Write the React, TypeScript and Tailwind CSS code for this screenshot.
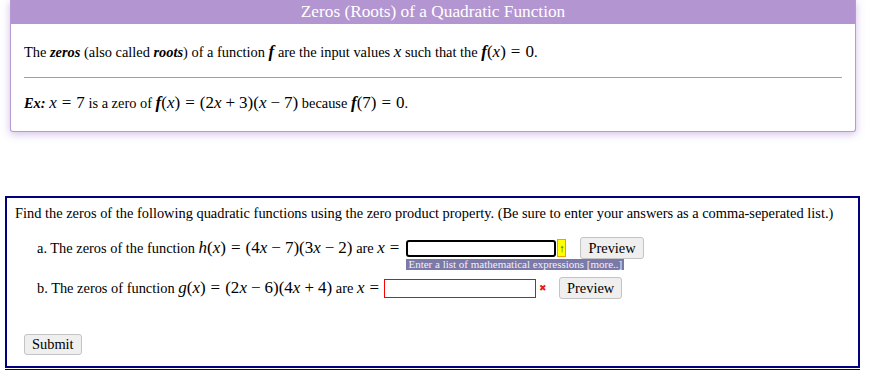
import React from "react";

const V = ({ children }: { children: React.ReactNode }) => (
  <span className="italic [font-family:'Liberation_Serif',serif]">{children}</span>
);

const M = ({ children }: { children: React.ReactNode }) => (
  <span className="text-[17px] whitespace-nowrap [font-family:'Liberation_Serif',serif]">{children}</span>
);

const Eq = () => <span className="mx-[5px]">=</span>;
const Op = ({ children }: { children: React.ReactNode }) => (
  <span className="mx-[4px]">{children}</span>
);

function PreviewBtn() {
  return (
    <button className="h-[22px] px-[7px] bg-[#efefef] border border-[#c4c4c4] rounded-[3px] text-[14.4px] leading-none text-black [font-family:'Liberation_Serif',serif]">
      Preview
    </button>
  );
}

export default function App() {
  return (
    <div className="w-[869px] h-[370px] overflow-hidden bg-white text-black text-[14.4px] [font-family:'Liberation_Serif',serif] relative">
      {/* Top card */}
      <div className="ml-[10px] w-[846px] border-x border-b border-[#b79ad3] rounded-b-[3px] shadow-[0_2px_8px_rgba(150,110,200,0.45)] bg-white">
        <div className="h-[24px] bg-[#b395d1] text-white text-[17.3px] flex items-center justify-center leading-none">
          Zeros (Roots) of a Quadratic Function
        </div>
        <div className="px-[13px]">
          <div className="pt-[18px] h-[53px] leading-[20px] whitespace-nowrap">
            The <b><i>zeros</i></b> (also called <b><i>roots</i></b>) of a function <M><V><b>f</b></V></M> are the input values <M><V>x</V></M> such that the{" "}
            <M><V><b>f</b></V>(<V>x</V>)<Eq />0</M>.
          </div>
          <div className="border-t border-[#a0a0a0]" />
          <div className="pt-[15px] h-[53px] leading-[20px] whitespace-nowrap">
            <b><i>Ex:</i></b> <M><V>x</V><Eq />7</M> is a zero of{" "}
            <M><V><b>f</b></V>(<V>x</V>)<Eq />(2<V>x</V><Op>+</Op>3)(<V>x</V><Op>−</Op>7)</M> because{" "}
            <M><V><b>f</b></V>(7)<Eq />0</M>.
          </div>
        </div>
      </div>

      {/* Problem box */}
      <div className="absolute left-[5px] top-[196px] w-[855px] h-[172px] border-2 border-[#000080] bg-white">
        <div className="pl-[8px] pt-[6px] leading-[18px] whitespace-nowrap">
          Find the zeros of the following quadratic functions using the zero product property. (Be sure to enter your answers as a comma-seperated list.)
        </div>
        <div className="ml-[30px] mt-[14px] flex items-center h-[24px] relative">
          <span className="whitespace-nowrap">
            a. The zeros of the function{" "}
            <M><V>h</V>(<V>x</V>)<Eq />(4<V>x</V><Op>−</Op>7)(3<V>x</V><Op>−</Op>2)</M> are{" "}
            <M><V>x</V><Eq /></M>
          </span>
          <div className="relative ml-[2px]">
            <div className="w-[150px] h-[17px] border-2 border-black rounded-[3px] bg-white" />
            <div className="absolute left-0 top-[19px] h-[11px] bg-[#7b79a8] text-[#f2f2f2] text-[11px] leading-[11px] px-[2px] whitespace-nowrap">
              Enter a list of mathematical expressions [more..]
            </div>
          </div>
          <div className="ml-[1px] w-[9px] h-[18px] bg-[#ffff00] border border-[#f0a000] text-[11px] leading-[16px] text-center text-[#304030]">↑</div>
          <div className="ml-[14px]"><PreviewBtn /></div>
        </div>
        <div className="ml-[30px] mt-[16px] flex items-center h-[24px]">
          <span className="whitespace-nowrap">
            b. The zeros of function{" "}
            <M><V>g</V>(<V>x</V>)<Eq />(2<V>x</V><Op>−</Op>6)(4<V>x</V><Op>+</Op>4)</M> are{" "}
            <M><V>x</V><Eq /></M>
          </span>
          <div className="ml-[0px] w-[152px] h-[19px] border border-[#ff0000] bg-white" />
          <span className="ml-[3px] text-[#e02020] text-[9px] leading-none">✖</span>
          <div className="ml-[12px]"><PreviewBtn /></div>
        </div>
        <div className="ml-[17px] mt-[34px]">
          <button className="h-[21px] px-[7px] bg-[#efefef] border border-[#c4c4c4] rounded-[3px] text-[14.4px] leading-none text-black [font-family:'Liberation_Serif',serif]">
            Submit
          </button>
        </div>
      </div>
      <div className="absolute left-[5px] top-[369px] w-[855px] h-[10px] border-2 border-[#000080]" />
    </div>
  );
}
